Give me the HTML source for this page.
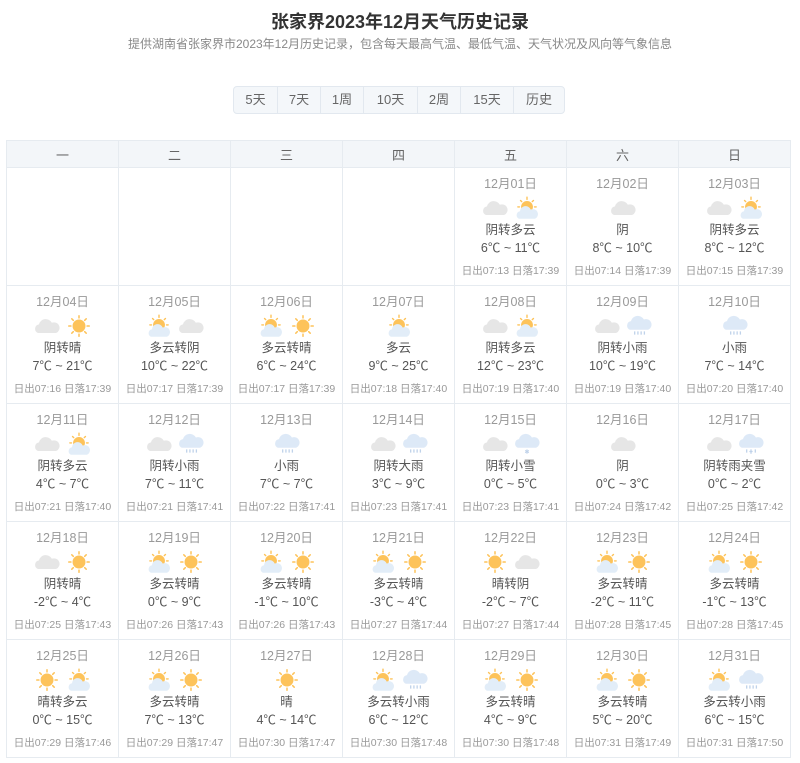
<!DOCTYPE html>
<html><head><meta charset="utf-8">
<style>
body{margin:0;background:#fff;font-family:"Liberation Sans","Noto Sans CJK SC",sans-serif;width:800px;height:763px;overflow:hidden}
h1{position:absolute;top:11px;left:0;width:800px;margin:0;text-align:center;font-size:18px;font-weight:bold;color:#333;line-height:22px}
.sub{position:absolute;top:37px;left:0;width:800px;text-align:center;font-size:12px;color:#888;line-height:15px}
.tabs{position:absolute;top:86px;left:233px;height:28px;border:1px solid #e2e8ef;border-radius:4px;background:#f4f7fa;display:flex;box-sizing:border-box}
.tabs span{display:block;line-height:26px;font-size:13px;color:#666;text-align:center;border-right:1px solid #e2e8ef;box-sizing:border-box}
.tabs span:last-child{border-right:none}
table{position:absolute;top:140px;left:6px;border-collapse:collapse;table-layout:fixed;width:785px}
th{height:26px;background:#f3f6f9;border:1px solid #e6ebf0;font-weight:normal;font-size:13px;color:#666;padding:0}
td{height:117px;border:1px solid #e6ebf0;padding:0;vertical-align:top;text-align:center}
.d{font-size:12.5px;color:#999;margin-top:9px;line-height:14px}
.ic{height:24px;margin-top:5px;display:flex;justify-content:center;gap:4px;align-items:center}
.ic svg{width:28px;height:24px}
.w{font-size:12.5px;color:#555;line-height:16px;margin-top:2px}
.t{font-size:12.5px;color:#555;line-height:16px;margin-top:2px}
.s{font-size:10.5px;color:#999;line-height:12px;margin-top:9px;white-space:nowrap}
</style></head><body>
<svg width="0" height="0" style="position:absolute">
<defs>
<symbol id="c" viewBox="0 0 26 22"><path d="M4.5 17.5a4.2 4.2 0 0 1 1-8A6.5 6.5 0 0 1 17.5 8a4.7 4.7 0 0 1 4 9.5z" fill="#e6e6e6"/></symbol>
<symbol id="s" viewBox="0 0 26 22"><circle cx="13" cy="11" r="6" fill="#fdc35a"/><g stroke="#fdc35a" stroke-width="1.4" stroke-linecap="round"><path d="M13 1.5v2M13 18.5v2M3.5 11h2M20.5 11h2M6.3 4.3l1.4 1.4M18.3 16.3l1.4 1.4M6.3 17.7l1.4-1.4M18.3 5.7l1.4-1.4"/></g></symbol>
<symbol id="p" viewBox="0 0 26 22"><circle cx="13" cy="10" r="5.5" fill="#fdc35a"/><g stroke="#fdc35a" stroke-width="1.3" stroke-linecap="round"><path d="M13 1v2M4.5 10h1.5M20 10h1.5M7 4l1.1 1.1M17.9 5.1l1.1-1.1"/></g><path d="M5.5 21a3.7 3.7 0 0 1 1-7A5.2 5.2 0 0 1 16.5 12.5a4.2 4.2 0 0 1 4 8.5z" fill="#e2edf8"/></symbol>
<symbol id="r" viewBox="0 0 26 22"><path d="M4.5 14.5a4.2 4.2 0 0 1 1-8A6.5 6.5 0 0 1 17.5 5a4.7 4.7 0 0 1 4 9.5z" fill="#dde9f7"/><g stroke="#bfd2ea" stroke-width="1.2"><path d="M9 16v3M12 16v3M15 16v3M18 16v3"/></g></symbol>
<symbol id="n" viewBox="0 0 26 22"><path d="M4.5 14.5a4.2 4.2 0 0 1 1-8A6.5 6.5 0 0 1 17.5 5a4.7 4.7 0 0 1 4 9.5z" fill="#dde9f7"/><path d="M13 16v4M11.3 17l3.4 2M11.3 19l3.4-2" stroke="#bfd2ea" stroke-width="1"/></symbol>
<symbol id="x" viewBox="0 0 26 22"><path d="M4.5 14.5a4.2 4.2 0 0 1 1-8A6.5 6.5 0 0 1 17.5 5a4.7 4.7 0 0 1 4 9.5z" fill="#dde9f7"/><g stroke="#bfd2ea" stroke-width="1.2"><path d="M9 16v3M17 16v3M13 16v4M11.5 18h3"/></g></symbol>
</defs></svg>
<h1>张家界2023年12月天气历史记录</h1>
<div class="sub">提供湖南省张家界市2023年12月历史记录，包含每天最高气温、最低气温、天气状况及风向等气象信息</div>
<div class="tabs"><span style="width:44px">5天</span><span style="width:43px">7天</span><span style="width:43px">1周</span><span style="width:54px">10天</span><span style="width:43px">2周</span><span style="width:53px">15天</span><span style="width:50px">历史</span></div>
<table>
<tr><th>一</th><th>二</th><th>三</th><th>四</th><th>五</th><th>六</th><th>日</th></tr>
<tr><td></td><td></td><td></td><td></td>
<td><div class="d">12月01日</div><div class="ic"><svg><use href="#c"/></svg><svg><use href="#p"/></svg></div><div class="w">阴转多云</div><div class="t">6℃ ~ 11℃</div><div class="s">日出07:13 日落17:39</div></td>
<td><div class="d">12月02日</div><div class="ic"><svg><use href="#c"/></svg></div><div class="w">阴</div><div class="t">8℃ ~ 10℃</div><div class="s">日出07:14 日落17:39</div></td>
<td><div class="d">12月03日</div><div class="ic"><svg><use href="#c"/></svg><svg><use href="#p"/></svg></div><div class="w">阴转多云</div><div class="t">8℃ ~ 12℃</div><div class="s">日出07:15 日落17:39</div></td></tr>
<tr>
<td><div class="d">12月04日</div><div class="ic"><svg><use href="#c"/></svg><svg><use href="#s"/></svg></div><div class="w">阴转晴</div><div class="t">7℃ ~ 21℃</div><div class="s">日出07:16 日落17:39</div></td>
<td><div class="d">12月05日</div><div class="ic"><svg><use href="#p"/></svg><svg><use href="#c"/></svg></div><div class="w">多云转阴</div><div class="t">10℃ ~ 22℃</div><div class="s">日出07:17 日落17:39</div></td>
<td><div class="d">12月06日</div><div class="ic"><svg><use href="#p"/></svg><svg><use href="#s"/></svg></div><div class="w">多云转晴</div><div class="t">6℃ ~ 24℃</div><div class="s">日出07:17 日落17:39</div></td>
<td><div class="d">12月07日</div><div class="ic"><svg><use href="#p"/></svg></div><div class="w">多云</div><div class="t">9℃ ~ 25℃</div><div class="s">日出07:18 日落17:40</div></td>
<td><div class="d">12月08日</div><div class="ic"><svg><use href="#c"/></svg><svg><use href="#p"/></svg></div><div class="w">阴转多云</div><div class="t">12℃ ~ 23℃</div><div class="s">日出07:19 日落17:40</div></td>
<td><div class="d">12月09日</div><div class="ic"><svg><use href="#c"/></svg><svg><use href="#r"/></svg></div><div class="w">阴转小雨</div><div class="t">10℃ ~ 19℃</div><div class="s">日出07:19 日落17:40</div></td>
<td><div class="d">12月10日</div><div class="ic"><svg><use href="#r"/></svg></div><div class="w">小雨</div><div class="t">7℃ ~ 14℃</div><div class="s">日出07:20 日落17:40</div></td></tr>
<tr>
<td><div class="d">12月11日</div><div class="ic"><svg><use href="#c"/></svg><svg><use href="#p"/></svg></div><div class="w">阴转多云</div><div class="t">4℃ ~ 7℃</div><div class="s">日出07:21 日落17:40</div></td>
<td><div class="d">12月12日</div><div class="ic"><svg><use href="#c"/></svg><svg><use href="#r"/></svg></div><div class="w">阴转小雨</div><div class="t">7℃ ~ 11℃</div><div class="s">日出07:21 日落17:41</div></td>
<td><div class="d">12月13日</div><div class="ic"><svg><use href="#r"/></svg></div><div class="w">小雨</div><div class="t">7℃ ~ 7℃</div><div class="s">日出07:22 日落17:41</div></td>
<td><div class="d">12月14日</div><div class="ic"><svg><use href="#c"/></svg><svg><use href="#r"/></svg></div><div class="w">阴转大雨</div><div class="t">3℃ ~ 9℃</div><div class="s">日出07:23 日落17:41</div></td>
<td><div class="d">12月15日</div><div class="ic"><svg><use href="#c"/></svg><svg><use href="#n"/></svg></div><div class="w">阴转小雪</div><div class="t">0℃ ~ 5℃</div><div class="s">日出07:23 日落17:41</div></td>
<td><div class="d">12月16日</div><div class="ic"><svg><use href="#c"/></svg></div><div class="w">阴</div><div class="t">0℃ ~ 3℃</div><div class="s">日出07:24 日落17:42</div></td>
<td><div class="d">12月17日</div><div class="ic"><svg><use href="#c"/></svg><svg><use href="#x"/></svg></div><div class="w">阴转雨夹雪</div><div class="t">0℃ ~ 2℃</div><div class="s">日出07:25 日落17:42</div></td></tr>
<tr>
<td><div class="d">12月18日</div><div class="ic"><svg><use href="#c"/></svg><svg><use href="#s"/></svg></div><div class="w">阴转晴</div><div class="t">-2℃ ~ 4℃</div><div class="s">日出07:25 日落17:43</div></td>
<td><div class="d">12月19日</div><div class="ic"><svg><use href="#p"/></svg><svg><use href="#s"/></svg></div><div class="w">多云转晴</div><div class="t">0℃ ~ 9℃</div><div class="s">日出07:26 日落17:43</div></td>
<td><div class="d">12月20日</div><div class="ic"><svg><use href="#p"/></svg><svg><use href="#s"/></svg></div><div class="w">多云转晴</div><div class="t">-1℃ ~ 10℃</div><div class="s">日出07:26 日落17:43</div></td>
<td><div class="d">12月21日</div><div class="ic"><svg><use href="#p"/></svg><svg><use href="#s"/></svg></div><div class="w">多云转晴</div><div class="t">-3℃ ~ 4℃</div><div class="s">日出07:27 日落17:44</div></td>
<td><div class="d">12月22日</div><div class="ic"><svg><use href="#s"/></svg><svg><use href="#c"/></svg></div><div class="w">晴转阴</div><div class="t">-2℃ ~ 7℃</div><div class="s">日出07:27 日落17:44</div></td>
<td><div class="d">12月23日</div><div class="ic"><svg><use href="#p"/></svg><svg><use href="#s"/></svg></div><div class="w">多云转晴</div><div class="t">-2℃ ~ 11℃</div><div class="s">日出07:28 日落17:45</div></td>
<td><div class="d">12月24日</div><div class="ic"><svg><use href="#p"/></svg><svg><use href="#s"/></svg></div><div class="w">多云转晴</div><div class="t">-1℃ ~ 13℃</div><div class="s">日出07:28 日落17:45</div></td></tr>
<tr>
<td><div class="d">12月25日</div><div class="ic"><svg><use href="#s"/></svg><svg><use href="#p"/></svg></div><div class="w">晴转多云</div><div class="t">0℃ ~ 15℃</div><div class="s">日出07:29 日落17:46</div></td>
<td><div class="d">12月26日</div><div class="ic"><svg><use href="#p"/></svg><svg><use href="#s"/></svg></div><div class="w">多云转晴</div><div class="t">7℃ ~ 13℃</div><div class="s">日出07:29 日落17:47</div></td>
<td><div class="d">12月27日</div><div class="ic"><svg><use href="#s"/></svg></div><div class="w">晴</div><div class="t">4℃ ~ 14℃</div><div class="s">日出07:30 日落17:47</div></td>
<td><div class="d">12月28日</div><div class="ic"><svg><use href="#p"/></svg><svg><use href="#r"/></svg></div><div class="w">多云转小雨</div><div class="t">6℃ ~ 12℃</div><div class="s">日出07:30 日落17:48</div></td>
<td><div class="d">12月29日</div><div class="ic"><svg><use href="#p"/></svg><svg><use href="#s"/></svg></div><div class="w">多云转晴</div><div class="t">4℃ ~ 9℃</div><div class="s">日出07:30 日落17:48</div></td>
<td><div class="d">12月30日</div><div class="ic"><svg><use href="#p"/></svg><svg><use href="#s"/></svg></div><div class="w">多云转晴</div><div class="t">5℃ ~ 20℃</div><div class="s">日出07:31 日落17:49</div></td>
<td><div class="d">12月31日</div><div class="ic"><svg><use href="#p"/></svg><svg><use href="#r"/></svg></div><div class="w">多云转小雨</div><div class="t">6℃ ~ 15℃</div><div class="s">日出07:31 日落17:50</div></td></tr>
</table>
</body></html>
